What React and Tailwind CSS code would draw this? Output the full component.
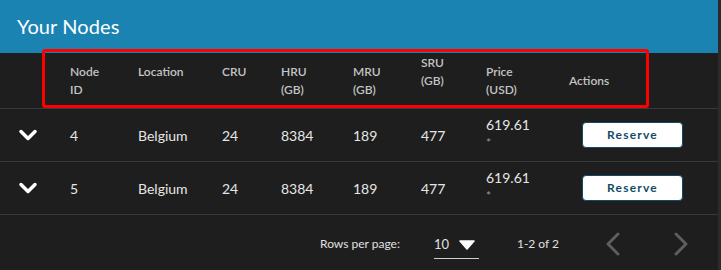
import { ChevronDown, ChevronLeft, ChevronRight } from "lucide-react"

const COLS = "grid grid-cols-[70px_68px_84px_59px_72px_68px_65px_83px_1fr]"

const NODES = [
  { id: 4, location: "Belgium", cru: 24, hru: 8384, mru: 189, sru: 477, price: "619.61" },
  { id: 5, location: "Belgium", cru: 24, hru: 8384, mru: 189, sru: 477, price: "619.61" },
]

function HeadCell({ lines, lift }) {
  return (
    <div className="flex flex-col justify-center text-[12px] leading-[18px] font-semibold text-[#c4c4c4]">
      {lines.map((l) => (
        <span key={l}>{l}</span>
      ))}
      {lift && <span className="invisible">&nbsp;</span>}
    </div>
  )
}

export default function App() {
  return (
    <div className="w-[721px] h-[270px] bg-[#1e1e1e] flex font-['Lato',sans-serif] overflow-hidden">
      <div className="relative w-[718px] shrink-0 flex flex-col">
        {/* title bar */}
        <div className="h-[53px] bg-[#1a83b2] flex items-center pl-[17px] pb-[2px]">
          <h2 className="text-[20px] text-white tracking-[0.1px]">Your Nodes</h2>
        </div>

        {/* header */}
        <div className={`${COLS} h-[56px] border-b border-[#3a3a3a]`}>
          <div />
          <HeadCell lines={["Node", "ID"]} />
          <HeadCell lines={["Location"]} lift />
          <HeadCell lines={["CRU"]} lift />
          <HeadCell lines={["HRU", "(GB)"]} />
          <HeadCell lines={["MRU", "(GB)"]} />
          <HeadCell lines={["SRU", "(GB)"]} lift />
          <HeadCell lines={["Price", "(USD)"]} />
          <HeadCell lines={["Actions"]} />
        </div>

        {/* rows */}
        {NODES.map((n) => (
          <div key={n.id} className={`${COLS} h-[53px] items-center border-b border-[#3a3a3a] text-[14px] text-[#e6e6e6]`}>
            <div className="flex pl-[14px]">
              <ChevronDown size={28} strokeWidth={3} className="text-white" />
            </div>
            <span>{n.id}</span>
            <span>{n.location}</span>
            <span>{n.cru}</span>
            <span>{n.hru}</span>
            <span>{n.mru}</span>
            <span>{n.sru}</span>
            <div className="flex flex-col leading-[18px] pb-[2px]">
              <span>{n.price}</span>
              <span className="text-[12px] text-[#9a9a9a]">*</span>
            </div>
            <div className="pl-[13px]">
              <button className="w-[101px] h-[26px] bg-white rounded-[4px] border border-[#0f4a66] text-[#134a68] text-[12px] font-bold tracking-[1.2px]">
                Reserve
              </button>
            </div>
          </div>
        ))}

        {/* footer */}
        <div className="flex-1 flex items-center whitespace-nowrap text-[12px] text-[#e0e0e0] pl-[320px] pt-[2px]">
          <span className="shrink-0">Rows per page:</span>
          <div className="ml-[34px] w-[45px] shrink-0 h-[30px] flex items-center justify-between border-b border-[#cfcfcf] pt-[3px]">
            <span className="text-[13px]">10</span>
            <svg width="16" height="10" viewBox="0 0 16 10" className="mr-[4px]">
              <path d="M1 1 H15 L8 9 Z" fill="#ffffff" strokeLinejoin="round" stroke="#ffffff" strokeWidth="1.5" />
            </svg>
          </div>
          <span className="ml-[38px] shrink-0">1-2 of 2</span>
          <ChevronLeft size={40} strokeWidth={1.7} className="ml-[34px] shrink-0 text-[#5f5f5f]" />
          <ChevronRight size={40} strokeWidth={1.7} className="ml-[28px] shrink-0 text-[#5f5f5f]" />
        </div>

        {/* annotation box */}
        <div className="absolute left-[42px] top-[49px] w-[607px] h-[59px] border-[3px] border-[#ff0000] rounded-[3px] pointer-events-none" />
      </div>
      <div className="w-[3px] bg-[#2b2b2b]" />
    </div>
  )
}
